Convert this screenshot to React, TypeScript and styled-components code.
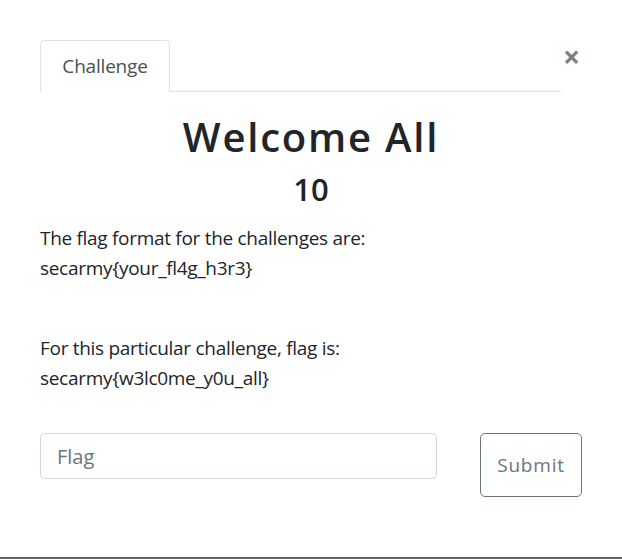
import styled, { createGlobalStyle } from "styled-components";

const GlobalStyle = createGlobalStyle`
  html, body {
    margin: 0;
    padding: 0;
    background: #ffffff;
  }
  body {
    font-family: "Open Sans", "Noto Sans", sans-serif;
    color: #212529;
  }
  * {
    box-sizing: border-box;
  }
`;

const Modal = styled.div`
  width: 622px;
  height: 559px;
  padding: 40px 40px 0 40px;
  border-bottom: 2px solid #636363;
  background: #ffffff;
`;

const TopRow = styled.div`
  display: flex;
  align-items: flex-start;
`;

const Tabs = styled.ul`
  flex: 1;
  display: flex;
  list-style: none;
  margin: 0;
  padding: 0;
  border-bottom: 1px solid #dee2e6;
`;

interface TabProps {
  active?: boolean;
}

const Tab = styled.li<TabProps>`
  width: 130px;
  margin-bottom: -1px;
  padding: 10px 0;
  text-align: center;
  font-size: 19px;
  letter-spacing: -0.2px;
  line-height: 30px;
  color: #495057;
  border: 1px solid ${(props) => (props.active ? "#dee2e6" : "transparent")};
  border-bottom-color: ${(props) => (props.active ? "#ffffff" : "transparent")};
  border-radius: 5px 5px 0 0;
  background: #ffffff;
`;

const CloseButton = styled.button`
  width: 21px;
  margin: 2px 0 0 0;
  padding: 0;
  border: 0;
  background: transparent;
  font-family: "Open Sans", sans-serif;
  font-size: 30px;
  font-weight: 700;
  line-height: 1;
  color: #000000;
  opacity: 0.5;
  cursor: pointer;
`;

const Title = styled.h2`
  margin: 21px 0 0 0;
  text-align: center;
  font-size: 40px;
  line-height: 48px;
  font-weight: 600;
  letter-spacing: 1.8px;
  color: #212529;
`;

const Value = styled.h4`
  margin: 10px 0 0 0;
  text-align: center;
  font-size: 31px;
  line-height: 36px;
  font-weight: 600;
  color: #212529;
`;

const Description = styled.div`
  margin-top: 16px;
  font-size: 19px;
  letter-spacing: -0.3px;
  line-height: 30px;
  p {
    margin: 0;
  }
  p + p {
    margin-top: 50px;
  }
`;

const SubmitRow = styled.form`
  display: flex;
  justify-content: space-between;
  align-items: flex-start;
  margin-top: 40px;
`;

const FlagInput = styled.input`
  width: 397px;
  height: 46px;
  padding: 0 16px;
  border: 1px solid #ced4da;
  border-radius: 5px;
  font-family: "Open Sans", sans-serif;
  font-size: 20px;
  color: #495057;
  outline: none;
  &::placeholder {
    color: #6c757d;
  }
`;

const SubmitButton = styled.button`
  width: 102px;
  height: 64px;
  padding: 0;
  border: 1px solid #6c757d;
  border-radius: 5px;
  background: transparent;
  font-family: "Open Sans", sans-serif;
  font-size: 19px;
  letter-spacing: 0.8px;
  color: #6c757d;
  cursor: pointer;
`;

const App = () => {
  return (
    <>
      <GlobalStyle />
      <Modal>
        <TopRow>
          <Tabs>
            <Tab active>Challenge</Tab>
          </Tabs>
          <CloseButton type="button" aria-label="Close">
            ×
          </CloseButton>
        </TopRow>
        <Title>Welcome All</Title>
        <Value>10</Value>
        <Description>
          <p>
            The flag format for the challenges are:
            <br />
            secarmy{"{your_fl4g_h3r3}"}
          </p>
          <p>
            For this particular challenge, flag is:
            <br />
            secarmy{"{w3lc0me_y0u_all}"}
          </p>
        </Description>
        <SubmitRow onSubmit={(e) => e.preventDefault()}>
          <FlagInput type="text" placeholder="Flag" />
          <SubmitButton type="submit">Submit</SubmitButton>
        </SubmitRow>
      </Modal>
    </>
  );
};

export default App;
